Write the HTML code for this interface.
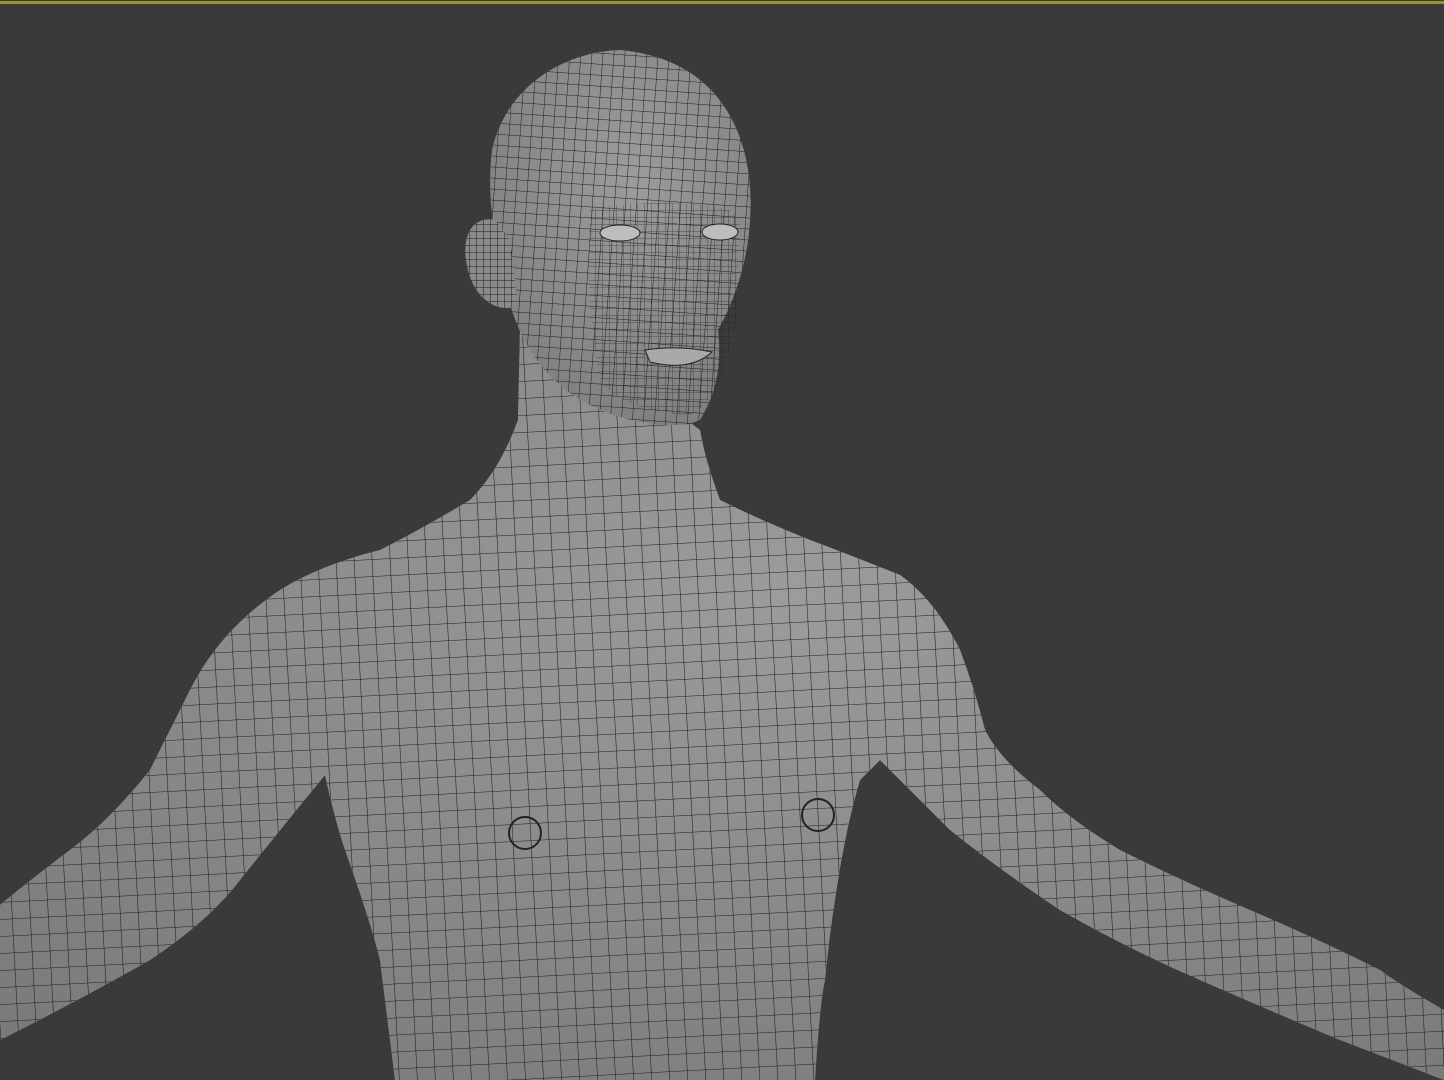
<!DOCTYPE html>
<html><head><meta charset="utf-8"><style>
html,body{margin:0;padding:0;background:#3a3a3a;}
svg{display:block}
</style></head><body>
<svg width="1444" height="1080" viewBox="0 0 1444 1080" xmlns="http://www.w3.org/2000/svg">
<defs>
<pattern id="g" width="11" height="11" patternUnits="userSpaceOnUse" patternTransform="rotate(4)">
<path d="M0 0H11M0 0V11" stroke="#1e1e1e" stroke-width="1" fill="none"/>
</pattern>
<pattern id="gf" width="7" height="7" patternUnits="userSpaceOnUse">
<path d="M0 0H7M0 0V7" stroke="#1e1e1e" stroke-width="1" fill="none"/>
</pattern>
<pattern id="gb" width="18" height="17" patternUnits="userSpaceOnUse" patternTransform="rotate(-3)">
<path d="M0 0H18M0 0V17" stroke="#1e1e1e" stroke-width="1.1" fill="none"/>
</pattern>
<radialGradient id="sh" cx="0.55" cy="0.35" r="0.8">
<stop offset="0" stop-color="#9c9c9c"/><stop offset="1" stop-color="#7a7a7a"/>
</radialGradient>
</defs>
<rect width="1444" height="1080" fill="#3a3a3a"/>
<rect x="0" y="1" width="1444" height="3" fill="#9a9430"/>
<path id="b" d="M520 330 L518 420 Q500 470 470 500 Q420 530 380 550 Q320 565 280 590 Q220 630 190 690 Q165 740 150 770 Q110 820 70 850 Q30 880 0 905 L0 1040 Q80 1000 150 960 Q210 920 240 880 Q280 830 325 775 Q335 820 345 850 Q370 920 380 960 L395 1080 L815 1080 Q820 1000 825 980 Q830 930 835 900 Q845 830 860 780 L880 760 Q920 800 950 830 Q1000 870 1060 910 Q1130 950 1200 980 Q1280 1015 1340 1040 L1444 1080 L1444 1010 Q1400 985 1380 970 Q1320 940 1250 910 Q1180 880 1120 850 Q1070 820 1040 790 Q1000 760 985 730 Q975 690 960 650 Q935 600 900 575 Q850 555 810 540 Q760 520 720 500 Q705 460 700 430 L660 400 Z" fill="url(#sh)"/>
<use href="#b" fill="url(#gb)"/>
<path d="M520 330 L518 420 Q500 470 470 500 Q420 530 380 550 Q320 565 280 590 Q220 630 190 690 Q165 740 150 770 Q110 820 70 850 Q30 880 0 905 L0 1040 Q80 1000 150 960 Q210 920 240 880 Q280 830 325 775 Q335 820 345 850 Q370 920 380 960 L395 1080 L815 1080 Q820 1000 825 980 Q830 930 835 900 Q845 830 860 780 L880 760 Q920 800 950 830 Q1000 870 1060 910 Q1130 950 1200 980 Q1280 1015 1340 1040 L1444 1080 L1444 1010 Q1400 985 1380 970 Q1320 940 1250 910 Q1180 880 1120 850 Q1070 820 1040 790 Q1000 760 985 730 Q975 690 960 650 Q935 600 900 575 Q850 555 810 540 Q760 520 720 500 Q705 460 700 430 L660 400 Z" fill="url(#gb)"/>
<path d="M620 50 C560 52 505 90 492 150 C486 200 495 240 505 280 C512 330 540 380 590 405 C630 425 680 430 700 420 C715 395 722 370 718 330 C735 300 748 260 750 220 C755 150 730 60 620 50 Z" fill="url(#sh)"/>
<path d="M620 50 C560 52 505 90 492 150 C486 200 495 240 505 280 C512 330 540 380 590 405 C630 425 680 430 700 420 C715 395 722 370 718 330 C735 300 748 260 750 220 C755 150 730 60 620 50 Z" fill="url(#g)"/>
<path d="M495 220 C470 215 460 240 468 270 C475 300 500 315 518 305 L510 240 Z" fill="#8a8a8a"/>
<path d="M495 220 C470 215 460 240 468 270 C475 300 500 315 518 305 L510 240 Z" fill="url(#gf)"/>
<path d="M590 210 C620 200 720 200 740 215 L735 330 Q720 400 690 415 Q620 410 600 380 Q585 300 590 210 Z" fill="url(#gf)" opacity="0.6"/>
<ellipse cx="620" cy="233" rx="20" ry="8" fill="#bdbdbd" stroke="#222"/>
<ellipse cx="720" cy="232" rx="18" ry="8" fill="#bdbdbd" stroke="#222"/>
<path d="M645 350 Q680 345 712 352 Q690 372 650 362 Z" fill="#a9a9a9" stroke="#222"/>
<circle cx="525" cy="833" r="16" fill="none" stroke="#222" stroke-width="2"/>
<circle cx="818" cy="815" r="16" fill="none" stroke="#222" stroke-width="2"/>
</svg>
</body></html>
